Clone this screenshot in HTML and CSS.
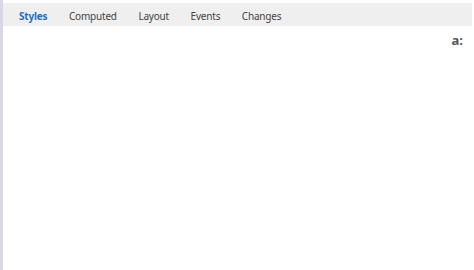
FILE: index.html
```html
<!DOCTYPE html>
<html lang="en">
  <head>
    <meta charset="utf-8">
    <title>Styles</title>
    <link rel="stylesheet" href="styles.css">
  </head>
  <body>
    <div id="panel">
      <div id="tabs">
        <span class="tab active">Styles</span>
        <span class="tab">Computed</span>
        <span class="tab">Layout</span>
        <span class="tab">Events</span>
        <span class="tab">Changes</span>
      </div>
      <div id="content">
        <span class="selector">a:</span>
      </div>
    </div>
  </body>
</html>
```

FILE: styles.css
```css
html {
  height: 100%;
}
body {
  margin: 0;
  padding: 0;
  background: #ffffff;
  font-family: "Noto Sans", sans-serif;
  font-size: 10px;
  height: 100%;
}

#panel {
  height: 100%;
  box-sizing: border-box;
  border-left: 3px solid #d6d8e7;
  padding-top: 3px;
  padding-right: 2px;
}

#tabs {
  display: flex;
  height: 23px;
  align-items: center;
  background-color: #efefef;
  padding-left: 16px;
  padding-top: 2px;
  box-sizing: border-box;
  gap: 21.6px;
  letter-spacing: -0.2px;
}

.tab {
  color: #444;
  cursor: pointer;
}

.tab.active {
  color: #1e6ebf;
  font-weight: bold;
}

#content {
  display: flex;
  justify-content: flex-end;
  padding: 5px 9px 0 0;
}

.selector {
  font-size: 13px;
  color: #555;
  font-weight: bold;
}
```
